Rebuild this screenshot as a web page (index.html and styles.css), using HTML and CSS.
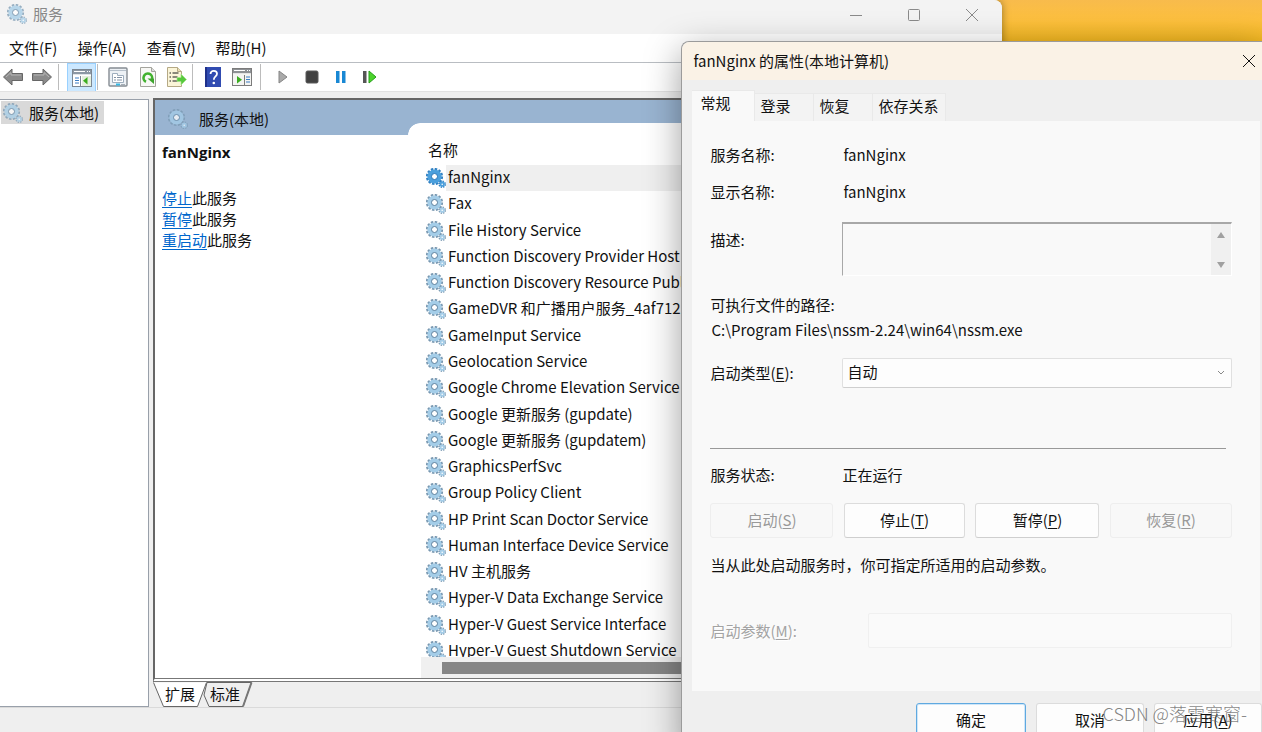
FILE: index.html
```html
<!DOCTYPE html>
<html lang="zh-CN">
<head>
<meta charset="utf-8">
<title>服务</title>
<link rel="stylesheet" href="styles.css">
</head>
<body>
<svg class="defs" aria-hidden="true">
  <defs>
    <symbol id="gear" viewBox="0 0 20 20">
      <circle class="gear-teeth" cx="8.500" cy="8.500" r="7.300" fill="none" stroke-width="2.600" stroke-dasharray="2.400 1.422"/>
      <circle class="gear-body" cx="8.500" cy="8.500" r="5" stroke-width="4.200"/>
      <circle class="gear-rim" cx="8.500" cy="8.500" r="3" stroke-width="1"/>
      <circle class="gear-teeth" cx="16.200" cy="16.200" r="3" fill="none" stroke-width="1.600" stroke-dasharray="1.400 .956"/>
      <circle class="gear-body" cx="16.200" cy="16.200" r="1.700" stroke-width="1.800"/>
    </symbol>
  </defs>
</svg>
<div class="desktop">
  <main class="window">
    <header class="titlebar">
      <svg class="gear pale"><use href="#gear"/></svg>
      <h1>服务</h1>
      <div class="caption-buttons">
        <button aria-label="最小化"><svg width="12" height="12"><path d="M0 6.5h12"/></svg></button>
        <button aria-label="最大化"><svg width="12" height="12"><rect x=".5" y=".5" width="11" height="11" rx="1"/></svg></button>
        <button aria-label="关闭"><svg width="12" height="12"><path d="M0 0l12 12M12 0L0 12"/></svg></button>
      </div>
    </header>
    <nav class="menubar">
      <button>文件(F)</button><button>操作(A)</button><button>查看(V)</button><button>帮助(H)</button>
    </nav>
    <div class="toolbar">
      <button aria-label="后退"><svg width="22" height="20"><path d="M1.500 10L10 2v4.500h10.500v7H10V18z" fill="#8b8b8b" stroke="#666"/><path d="M4 10l5-4.500V8h10" fill="none" stroke="#b5b5b5"/></svg></button>
      <button aria-label="前进"><svg width="22" height="20"><path d="M20.500 10L12 2v4.500H1.500v7H12V18z" fill="#8b8b8b" stroke="#666"/><path d="M3 8h10V5.500L18 10" fill="none" stroke="#b5b5b5"/></svg></button>
      <span class="sep"></span>
      <button class="on" aria-label="显示/隐藏控制台树"><svg width="20" height="18"><rect x=".5" y=".5" width="19" height="17" fill="#fff" stroke="#7c8792"/><path d="M1 1h18v5H1z" fill="#8c98a5"/><path d="M2 2.500h11M15 2.500h1M17 2.500h1" stroke="#fff"/><path d="M1 5.500h18" stroke="#dfe4e9"/><path d="M3 9h4M3 11.500h4M3 14h4" stroke="#3b7dc4"/><path d="M8.500 7v10" stroke="#7c8792"/><path d="M10 7h9v10h-9z" fill="#e5efdf"/><path d="M15.500 8v7.500L11 11.700z" fill="#3bad20"/></svg></button>
      <span class="sep"></span>
      <button class="props" aria-label="属性"><svg width="20" height="20"><rect x="1" y="1" width="18" height="18" rx="1" fill="#edf1f5" stroke="#858c93" stroke-width="1.400"/><path d="M2 3.500h16" stroke="#b5c0cb"/><path d="M4.500 6.500h5v2h6v7h-11z" fill="#fff" stroke="#9eaebe"/><path d="M6 10.500h2M9 10.500h5M6 13h2M9 13h5" stroke="#8292a5"/><path d="M8 17.500h4" stroke="#36b8e4" stroke-width="2"/><path d="M13 17.500h4" stroke="#a5aeb7"/></svg></button>
      <button aria-label="刷新"><svg width="18" height="20"><path d="M1.500.5h11l4 4v15h-15z" fill="#f8f8f5" stroke="#a4a49d"/><path d="M12.500.5v4h4" fill="#ddd" stroke="#a4a49d"/><path d="M7 14.800A4.300 4.300 0 1 1 13 12" fill="none" stroke="#42b22f" stroke-width="2.600"/><path d="M8.500 11.500h6.500V17z" fill="#3ca42c"/></svg></button>
      <button aria-label="导出列表"><svg width="21" height="20"><path d="M1.500.5h10l4 4v15h-14z" fill="#fbf5d8" stroke="#b5a985"/><path d="M11.500.5v4h4" fill="#e8ddb3" stroke="#b5a985"/><path d="M3.500 6h1.500M3.500 10h1.500M3.500 14h1.500M6.500 6h6M6.500 10h5M6.500 14h5" stroke="#66645a" stroke-width="1.300"/><path d="M11 10.500h4V7l5.500 5.500L15 18v-3.500h-4z" fill="#57c83c" stroke="#a5e58a" stroke-width=".7"/></svg></button>
      <span class="sep"></span>
      <button aria-label="帮助"><svg width="16" height="20"><rect width="16" height="20" fill="#304bb1"/><path d="M1 0v20" stroke="#1f318b" stroke-width="2"/><path d="M5.500 7C5.500 2.800 12 3 12 6.800c0 2.700-3.200 2.700-3.200 6" fill="none" stroke="#fff" stroke-width="1.800"/><circle cx="8.800" cy="16" r="1.300" fill="#fff"/></svg></button>
      <button aria-label="显示/隐藏操作窗格"><svg width="20" height="18"><rect x=".5" y=".5" width="19" height="17" fill="#f4f4f2" stroke="#7b7b7b"/><path d="M1 1h18v5H1z" fill="#8d9094"/><path d="M2 2.500h11M15 2.500h1M17 2.500h1" stroke="#fff"/><path d="M1 5.500h18" stroke="#e4e4e4"/><path d="M12.500 7v10" stroke="#7b7b7b"/><path d="M14 9h4M14 11.500h4M14 14h4" stroke="#3b7dc4"/><path d="M5 8v7.500l5-3.800z" fill="#3bad20"/></svg></button>
      <span class="sep wide"></span>
      <button aria-label="启动"><svg width="12" height="14"><path d="M2 1v12l8-6z" fill="#aaa" stroke="#858585"/></svg></button>
      <button aria-label="停止"><svg width="14" height="14"><rect x="1" y="1" width="12" height="12" rx="1.500" fill="#414141" stroke="#5a5a5a"/></svg></button>
      <button aria-label="暂停"><svg width="12" height="14"><path d="M1 1h3.500v12H1zM7 1h3.500v12H7z" fill="#1988d4"/></svg></button>
      <button aria-label="重新启动"><svg width="16" height="14"><path d="M1 1h3.500v12H1z" fill="#555"/><path d="M7 1v12l7-6z" fill="#4cd42c" stroke="#259e19"/></svg></button>
    </div>
    <div class="panes">
      <aside class="tree">
        <button class="tree-node"><svg class="gear pale"><use href="#gear"/></svg>服务(本地)</button>
      </aside>
      <section class="result">
        <div class="sheet">
          <div class="banner"><svg class="gear pale"><use href="#gear"/></svg><h2>服务(本地)</h2></div>
          <div class="details">
            <h3>fanNginx</h3>
            <p><a href="#stop">停止</a>此服务</p>
            <p><a href="#pause">暂停</a>此服务</p>
            <p><a href="#restart">重启动</a>此服务</p>
          </div>
          <div class="list">
            <div class="list-head">名称</div>
            <div class="rows-clip">
            <ul class="rows">
              <li class="selected"><svg class="gear"><use href="#gear"/></svg><span>fanNginx</span></li>
              <li><svg class="gear"><use href="#gear"/></svg><span>Fax</span></li>
              <li><svg class="gear"><use href="#gear"/></svg><span>File History Service</span></li>
              <li><svg class="gear"><use href="#gear"/></svg><span>Function Discovery Provider Host</span></li>
              <li><svg class="gear"><use href="#gear"/></svg><span>Function Discovery Resource Publication</span></li>
              <li><svg class="gear"><use href="#gear"/></svg><span>GameDVR 和广播用户服务_4af712</span></li>
              <li><svg class="gear"><use href="#gear"/></svg><span>GameInput Service</span></li>
              <li><svg class="gear"><use href="#gear"/></svg><span>Geolocation Service</span></li>
              <li><svg class="gear"><use href="#gear"/></svg><span>Google Chrome Elevation Service (</span></li>
              <li><svg class="gear"><use href="#gear"/></svg><span>Google 更新服务 (gupdate)</span></li>
              <li><svg class="gear"><use href="#gear"/></svg><span>Google 更新服务 (gupdatem)</span></li>
              <li><svg class="gear"><use href="#gear"/></svg><span>GraphicsPerfSvc</span></li>
              <li><svg class="gear"><use href="#gear"/></svg><span>Group Policy Client</span></li>
              <li><svg class="gear"><use href="#gear"/></svg><span>HP Print Scan Doctor Service</span></li>
              <li><svg class="gear"><use href="#gear"/></svg><span>Human Interface Device Service</span></li>
              <li><svg class="gear"><use href="#gear"/></svg><span>HV 主机服务</span></li>
              <li><svg class="gear"><use href="#gear"/></svg><span>Hyper-V Data Exchange Service</span></li>
              <li><svg class="gear"><use href="#gear"/></svg><span>Hyper-V Guest Service Interface</span></li>
              <li><svg class="gear"><use href="#gear"/></svg><span>Hyper-V Guest Shutdown Service</span></li>
            </ul>
            </div>
            <div class="scrollbar"><div class="thumb"></div></div>
          </div>
        </div>
        <div class="view-tabs">
          <svg class="tab-shapes" width="100" height="26" aria-hidden="true"><path d="M51 13l5 11.500h34L98.500.5H54z" fill="#efefef" stroke="#666"/><path d="M98.500.5L90 24.500" stroke="#777" stroke-width="2"/><path d="M.5.5l10 24h34l9-24" fill="#fff" stroke="#666"/></svg>
          <button>扩展</button><button>标准</button>
        </div>
      </section>
    </div>
    <footer class="status"></footer>
  </main>

  <section class="dialog" role="dialog" aria-labelledby="dialog-title">
    <header class="dialog-title">
      <h2 id="dialog-title">fanNginx 的属性(本地计算机)</h2>
      <button aria-label="关闭"><svg width="12" height="12"><path d="M0 0l12 12M12 0L0 12"/></svg></button>
    </header>
    <div class="tabs" role="tablist">
      <button role="tab" class="active" aria-selected="true">常规</button><button role="tab">登录</button><button role="tab">恢复</button><button role="tab">依存关系</button>
    </div>
    <form class="page">
      <div class="field"><span>服务名称:</span><span class="value">fanNginx</span></div>
      <div class="field"><span>显示名称:</span><span class="value">fanNginx</span></div>
      <div class="field desc">
        <label for="desc">描述:</label>
        <div class="memo">
          <textarea id="desc" readonly></textarea>
          <div class="memo-scroll"><svg width="10" height="6"><path d="M1 6l4-6 4 6z"/></svg><svg width="10" height="6"><path d="M1 0l4 6 4-6z"/></svg></div>
        </div>
      </div>
      <div class="path"><p>可执行文件的路径:</p><p class="path-value">C:\Program Files\nssm-2.24\win64\nssm.exe</p></div>
      <div class="field startup">
        <label for="type">启动类型(<u>E</u>):</label>
        <div class="select"><select id="type"><option>自动</option></select><svg width="8" height="6"><path d="M1 1l3 3 3-3"/></svg></div>
      </div>
      <hr>
      <div class="field"><span>服务状态:</span><span>正在运行</span></div>
      <div class="actions">
        <button type="button" disabled>启动(<u>S</u>)</button>
        <button type="button">停止(<u>T</u>)</button>
        <button type="button">暂停(<u>P</u>)</button>
        <button type="button" disabled>恢复(<u>R</u>)</button>
      </div>
      <p class="hint">当从此处启动服务时，你可指定所适用的启动参数。</p>
      <div class="params">
        <label for="params">启动参数(<u>M</u>):</label>
        <input id="params" type="text" disabled>
      </div>
    </form>
    <footer class="dialog-buttons">
      <button class="default">确定</button>
      <button>取消</button>
      <button>应用(<u>A</u>)</button>
    </footer>
  </section>
  <div class="watermark">CSDN @落雪寒窗-</div>
</div>
</body>
</html>
```
FILE: styles.css
```css
* { box-sizing: border-box; }
body, h1, h2, h3, p, ul { margin: 0; padding: 0; }
body, button, select, input, textarea {
  font: 15px/22px "Noto Sans CJK SC", sans-serif;
  color: #111;
}
button { border: 0; padding: 0; background: none; }
h1, h2 { font-size: 15px; font-weight: 400; }
.defs { position: absolute; width: 0; height: 0; }

.desktop {
  position: relative;
  height: 100vh;
  overflow: hidden;
  background: linear-gradient(#f8bb4c 0, #fdc03e 20px, #f0b620 42px);
}

/* Gears */
.gear { width: 20px; height: 20px; flex: none; }
.gear-teeth { stroke: var(--teeth, #7897b0); }
.gear-body { fill: #fff; stroke: var(--body, #a4cde8); }
.gear-rim { fill: none; stroke: var(--rim, #5c809e); }
.pale { opacity: .75; }
.selected .gear { --teeth: #2f7fc1; --body: #4a9fdc; --rim: #2c76b5; }

/* Main window */
.window {
  position: absolute;
  inset: 0 260px 0 0;
  display: flex;
  flex-direction: column;
  background: #efefef;
  border-radius: 0 8px 0 0;
  overflow: hidden;
  box-shadow: 0 0 8px rgba(0, 0, 0, .4);
}
.titlebar {
  display: flex;
  align-items: center;
  height: 34px;
  padding: 0 0 7px 7px;
  background: #f3f3f3;
}
.titlebar h1 { margin-left: 6px; color: #888; flex: 1; }
.caption-buttons { display: flex; padding-right: 1px; }
.caption-buttons button { width: 58px; height: 27px; padding-top: 2px; }
.caption-buttons path, .caption-buttons rect { fill: none; stroke: #8a8a8a; }
.menubar {
  display: flex;
  gap: 20px;
  height: 29px;
  padding: 0 9px;
  background: #fff;
  border-bottom: 1px solid #b9bdc2;
}
.toolbar {
  display: flex;
  align-items: center;
  height: 29px;
  padding-left: 1px;
  background: #fff;
  border-bottom: 1px solid #e2e2e2;
}
.toolbar button { width: 29px; height: 28px; display: flex; align-items: center; justify-content: center; }
.toolbar button:first-child { width: 24px; }
.toolbar button:nth-child(2) { width: 33px; }
.toolbar .on { margin-left: 3px; background: #cce8ff; border: 1px solid #99d1ff; border-width: 1px 1px 0; }
.toolbar .sep { width: 1px; height: 26px; background: #bcbcbc; margin: 0 5px 0 1px; }
.toolbar .sep.wide { margin: 0 7px 0 4px; }
.toolbar .on + .sep { margin: 0 0 0 1px; }
.toolbar .sep:nth-child(3) { margin-left: 0; }
.toolbar .props { margin: 0 1px 0 5px; }

.panes { flex: 1; display: flex; gap: 4px; padding-top: 6px; min-height: 0; }
.tree {
  width: 149px;
  margin-top: 1px;
  background: #fff;
  border: 1px solid #99a0aa;
  border-left: 0;
}
.tree-node {
  display: flex;
  align-items: center;
  gap: 6px;
  height: 23px;
  margin: 1px 0 0 1px;
  padding: 0 5px 0 2px;
  background: #d9d9d9;
}
.result { flex: 1; display: flex; flex-direction: column; min-width: 0; }
.sheet {
  flex: 1;
  min-height: 0;
  display: grid;
  grid-template: 35px minmax(0, 1fr) / 266px minmax(0, 1fr);
  background: #fff;
  border: 2px solid #7a7a7a;
  border-color: #666 #666 #777 #666;
  border-bottom: 4px double #777;
}
.banner {
  grid-area: 1 / 1 / 2 / 3;
  display: flex;
  align-items: center;
  gap: 11px;
  padding: 2px 0 0 13px;
  background: #99b4d1;
}
.details { grid-area: 2 / 1; padding: 6px 7px; }
.details h3 { font: 700 15px/22px "Open Sans", sans-serif; margin-bottom: 24px; }
.details p { line-height: 21px; }
.details a { color: #0066cc; text-underline-offset: 3px; }
.list {
  grid-area: 1 / 2 / 3 / 3;
  margin-top: 23px;
  margin-left: -13px;
  padding-left: 13px;
  background: #fff;
  border-top-left-radius: 12px;
  clip-path: inset(0 0 0 0 round 12px 0 0 0);
  display: flex;
  flex-direction: column;
}
.list-head { padding: 16px 0 4px 7px; }
.rows-clip { flex: 1; min-height: 0; overflow: hidden; display: flex; flex-direction: column; }
.rows {
  flex: 1 0 auto;
  margin-bottom: -7px;
  list-style: none;
  display: flex;
  flex-direction: column;
}
.rows li { flex: 1 0 26px; display: flex; align-items: center; padding-left: 5px; white-space: nowrap; }
.rows li span { flex: 1; padding: 0 0 2px 2px; line-height: 24px; }
.rows .selected span { background: #efefef; }
.scrollbar { flex: none; height: 21px; padding: 5px 0 4px 21px; background: #f0f0f0; }
.thumb { height: 12px; background: #868686; }

.view-tabs { position: relative; display: flex; height: 25px; padding-left: 12px; gap: 15px; }
.view-tabs button { position: relative; height: 23px; }
.tab-shapes { position: absolute; left: 0; top: 0; }
.status { height: 25px; border-top: 1px solid #dadada; }

/* Properties dialog */
.dialog {
  position: absolute;
  inset: 41px 0 auto auto;
  width: 46%;
  min-width: 560px;
  background: #efefef;
  border: 1px solid #9b9b9b;
  border-width: 1px 0 0 1px;
  border-radius: 8px 0 0 0;
  box-shadow: 0 10px 36px 0 rgba(0, 0, 0, .38);
}
.dialog-title {
  display: flex;
  justify-content: space-between;
  align-items: center;
  height: 38px;
  padding: 0 7px 0 11px;
  background: #faf2e6;
  border-radius: 8px 0 0 0;
}
.dialog-title svg { display: block; }
.dialog-title path { stroke: #111; }
.tabs { display: flex; align-items: flex-end; height: 41px; padding-left: 10px; }
.tabs button {
  height: 28px;
  padding: 0 22px 3px 6px;
  background: #f3f3f3;
  border: 1px solid #e9e9e9;
  border-width: 1px 1px 0 0;
}
.tabs button:last-child { padding-right: 6px; }
.tabs .active { height: 31px; padding: 0 23px 6px 8px; background: #f9f9f9; }
.page {
  margin: 0 2px 0 10px;
  padding: 23px 28px 43px 18px;
  background: #f9f9f9;
}
.field { display: grid; grid-template-columns: 132px minmax(0, 1fr); align-items: center; }
.field + .field { margin-top: 15px; }
.field + .desc { margin-top: 19px; align-items: start; }
.desc label { padding-top: 7px; }
.memo {
  display: flex;
  height: 54px;
  border: 1px solid #fff;
  border-top: 2px solid #a8a8a8;
  border-left-color: #a8a8a8;
}
.memo textarea { flex: 1; min-width: 0; border: 0; padding: 0; resize: none; background: none; outline: 0; }
.memo-scroll {
  width: 20px;
  display: flex;
  flex-direction: column;
  justify-content: space-between;
  align-items: center;
  padding: 8px 0 7px;
  background: #f0f0f0;
}
.memo-scroll path { fill: #a0a0a0; }
.path { padding: 16px 0; }
.path p { line-height: 25px; }
.path-value { padding-left: 1px; }
.value { padding-left: 1px; }
.select { position: relative; }
.select select {
  display: block;
  width: 100%;
  height: 30px;
  padding: 0 4px 2px;
  appearance: none;
  background: #fdfdfd;
  border: 1px solid #e0e0e0;
  border-bottom-color: #cfcfcf;
  border-radius: 2px;
}
.startup label { padding-bottom: 1px; }
.select svg { position: absolute; right: 7px; top: 12px; }
.select path { fill: none; stroke: #888; }
.page hr { margin: 60px 6px 15px 0; border: 0; border-top: 1px solid #999; }
.actions { display: grid; grid-template-columns: 123px 121px 124px 122px; justify-content: space-between; margin-top: 17px; }
.actions button, .dialog-buttons button {
  height: 35px;
  padding-bottom: 2px;
  background: #fdfdfd;
  border: 1px solid #dcdcdc;
  border-bottom-color: #cfcfcf;
  border-radius: 3px;
}
.actions button:disabled { background: #f8f8f8; border-color: #eee; color: #999; }
.hint { margin: 16px 0 37px; }
.params { display: flex; align-items: center; color: #a3a3a3; text-shadow: 1px 1px #fff; }
.params label { width: 158px; }
.params input { flex: 1; min-width: 0; height: 35px; background: #fafafa; border: 1px solid #f0f0f0; border-radius: 2px; }
.dialog-buttons { display: grid; grid-template-columns: 110px 108px 108px; gap: 10px; justify-content: end; padding: 12px 0; }
.dialog-buttons .default { border: 1px solid #5fa9e0; box-shadow: inset 0 0 0 1px #cfe6f8; }
u { text-underline-offset: 2px; }
.watermark {
  position: absolute;
  right: 15px;
  bottom: 7px;
  font-size: 18px;
  line-height: 24px;
  font-weight: 300;
  color: rgba(100, 100, 100, .8);
  pointer-events: none;
}
```
